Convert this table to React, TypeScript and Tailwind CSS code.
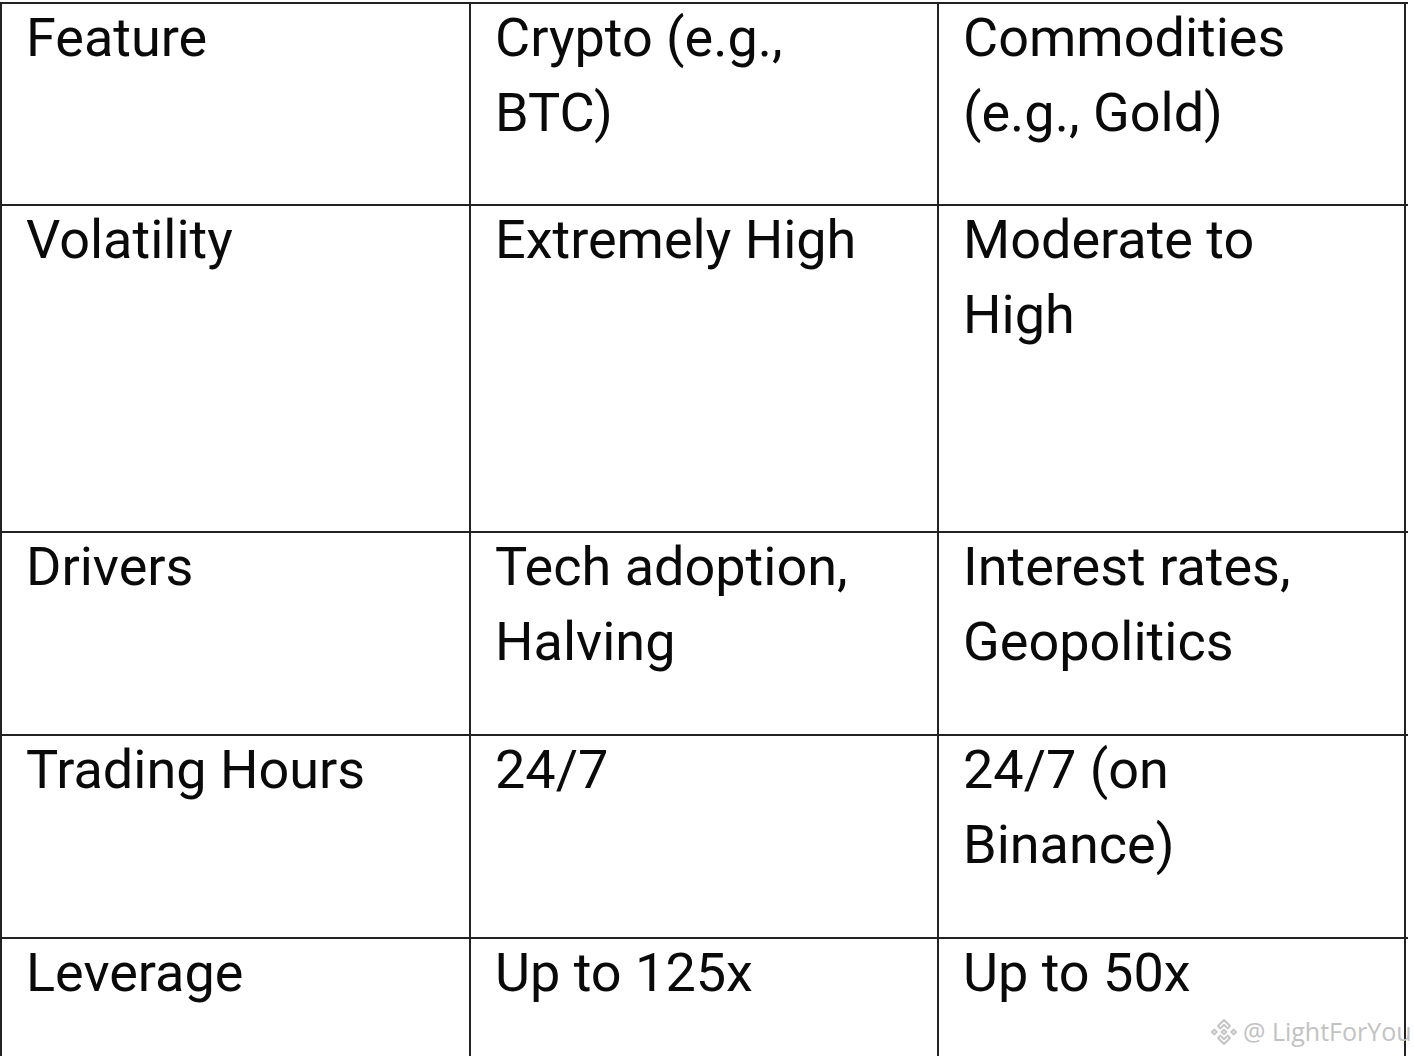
import React from 'react';

const rows: { h: string; cells: string[][] }[] = [
  { h: 'h-[202px]', cells: [['Feature'], ['Crypto (e.g.,', 'BTC)'], ['Commodities', '(e.g., Gold)']] },
  { h: 'h-[327px]', cells: [['Volatility'], ['Extremely High'], ['Moderate to', 'High']] },
  { h: 'h-[203px]', cells: [['Drivers'], ['Tech adoption,', 'Halving'], ['Interest rates,', 'Geopolitics']] },
  { h: 'h-[203px]', cells: [['Trading Hours'], ['24/7'], ['24/7 (on', 'Binance)']] },
  { h: 'h-[140px]', cells: [['Leverage'], ['Up to 125x'], ['Up to 50x']] },
];

export default function App() {
  return (
    <div className="relative w-[1414px] h-[1056px] overflow-hidden bg-white">
      <div className="pt-[2px] w-[1408px] font-['Roboto',sans-serif] text-[54px] leading-[75px] text-[#0a0a0a]">
        {rows.map((row, i) => (
          <div key={i} className={`grid grid-cols-[469px_468px_469px] border-t-2 border-[#222] ${row.h}`}>
            {row.cells.map((lines, j) => (
              <div key={j} className="border-l-2 border-[#222] pl-[24px] last:border-r-2">
                <div className="-mt-[4px]">
                  {lines.map((l, k) => (
                    <div key={k}>{l}</div>
                  ))}
                </div>
              </div>
            ))}
          </div>
        ))}
      </div>

      {/* watermark */}
      <div className="absolute left-[1208px] top-[1013px] flex items-center gap-[3px] text-[#c2c2c2] font-['Open_Sans',sans-serif] text-[25px] whitespace-nowrap">
        <svg width="32" height="32" viewBox="0 0 24 24" fill="none" stroke="#c4c4c4" strokeWidth="1.5" strokeLinejoin="round">
          <path d="M7.5 7.5L12 3l4.5 4.5-1.8 1.8L12 6.6 9.3 9.3z" />
          <path d="M3 12l1.8-1.8L6.6 12l-1.8 1.8z" />
          <path d="M17.4 12l1.8-1.8L21 12l-1.8 1.8z" />
          <path d="M7.5 16.5L12 21l4.5-4.5-1.8-1.8L12 17.4l-2.7-2.7z" />
          <path d="M12 10.2L13.8 12 12 13.8 10.2 12z" />
        </svg>
        <span>@ LightForYou</span>
      </div>
    </div>
  );
}
